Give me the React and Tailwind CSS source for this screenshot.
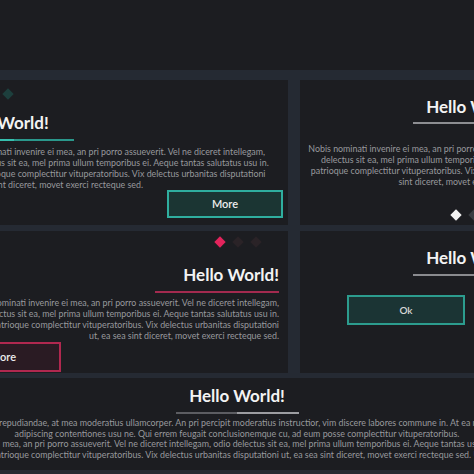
import React from 'react'

const LINES = [
  'Nobis nominati invenire ei mea, an pri porro assueverit. Vel ne diceret intellegam,',
  'odio delectus sit ea, mel prima ullum temporibus ei. Aeque tantas salutatus usu in.',
  'Eos ei patrioque complectitur vituperatoribus. Vix delectus urbanitas disputationi',
  'ut, ea sea sint diceret, movet exerci recteque sed.',
]

const CENTER_LINES = [
  'Nobis nominati invenire ei mea, an pri porro assueverit. Vel ne diceret intellegam, odio',
  'delectus sit ea, mel prima ullum temporibus ei. Aeque tantas salutatus usu in. Ei',
  'patrioque complectitur vituperatoribus. Vix delectus urbanitas disputationi ut, ea sea',
  'sint diceret, movet exerci recteque sed.',
]

const FOOT_LINES = [
  'Ea repudiandae, at mea moderatius ullamcorper. An pri percipit moderatius instructior, vim discere labores commune in. At ea mei',
  'adipiscing contentiones usu ne. Qui errem feugait conclusionemque cu, ad eum posse complectitur vituperatoribus.',
  'ei mea, an pri porro assueverit. Vel ne diceret intellegam, odio delectus sit ea, mel prima ullum temporibus ei. Aeque tantas usu',
  'Ei patrioque complectitur vituperatoribus. Vix delectus urbanitas disputationi ut, ea sea sint diceret, movet exerci recteque sed. Ut ei',
]

const Diamond = ({ c }) => <span className="block w-[8px] h-[8px] rotate-45" style={{ background: c }} />

const Heading = () => (
  <h2 className="text-[17px] leading-[20px] font-bold text-[#f3f3f3] whitespace-nowrap">Hello World!</h2>
)

const Body = ({ lines, align }) => (
  <div className={`flex flex-col text-[8.85px] leading-[11px] text-[#98999d] whitespace-nowrap ${align}`}>
    {lines.map(l => <span key={l}>{l}</span>)}
  </div>
)

export default function App() {
  return (
    <div className="w-[474px] h-[474px] overflow-hidden bg-[#252a33] font-[Lato,'Liberation_Sans',sans-serif]">
      <div className="h-[70px] bg-[#1c1d21]" />

      {/* row 1 */}
      <div className="mt-[10px] ml-[-60px] flex gap-[12px] h-[145px]">
        <div className="w-[348px] shrink-0 bg-[#1c1d21] flex flex-col pl-[13px] pr-[5px] pt-[10px]">
          <div className="flex gap-[10px] ml-[15px]">
            <Diamond c="#2fb3a3" />
            <Diamond c="#1d3f3d" />
            <Diamond c="#1d3f3d" />
          </div>
          <div className="mt-[15px]"><Heading /></div>
          <div className="mt-[6px] w-[121px] h-[2px] flex">
            <span className="flex-1 bg-[#36bfae]" />
            <span className="flex-1 bg-[#2a978b]" />
          </div>
          <div className="mt-[5px]"><Body lines={LINES} align="items-start" /></div>
          <button className="self-end w-[116px] h-[28px] border-2 border-[#2fae9f] bg-[#1b3533] text-[11px] font-semibold text-[#eeeeee]">More</button>
        </div>

        <div className="w-[348px] shrink-0 bg-[#1c1d21] flex flex-col items-center px-[4px] pt-[17px]">
          <Heading />
          <div className="mt-[5px] w-[122px] h-[2px] bg-[#8d8e92]" />
          <div className="mt-[19px] w-full"><Body lines={CENTER_LINES} align="items-center" /></div>
          <div className="mt-[24px] flex gap-[10px]">
            <Diamond c="#f2f2f2" />
            <Diamond c="#3a3c42" />
            <Diamond c="#3a3c42" />
          </div>
        </div>
      </div>

      {/* row 2 */}
      <div className="mt-[6px] ml-[-60px] flex gap-[12px] h-[142px]">
        <div className="w-[348px] shrink-0 bg-[#1c1d21] flex flex-col items-end pl-[5px] pr-[9px] pt-[7px]">
          <div className="flex gap-[10px] mr-[19px]">
            <Diamond c="#e3245c" />
            <Diamond c="#2a2327" />
            <Diamond c="#2a2327" />
          </div>
          <div className="mt-[19px]"><Heading /></div>
          <div className="mt-[6px] w-[124px] h-[2px] bg-[#a32a4f]" />
          <div className="mt-[4px]"><Body lines={LINES} align="items-end" /></div>
          <button className="mt-[1px] self-start w-[116px] h-[30px] border-2 border-[#b0284f] bg-[#2a1b23] text-[11px] font-semibold text-[#eeeeee]">More</button>
        </div>

        <div className="w-[348px] shrink-0 bg-[#1c1d21] flex flex-col items-center pt-[17px]">
          <Heading />
          <div className="mt-[6px] w-[122px] h-[2px] bg-[#8a8b8f]" />
          <div className="mt-[19px] flex gap-[18px]">
            <button className="w-[118px] h-[30px] border-2 border-[#2c9c8e] bg-[#1b3434] text-[10px] font-semibold text-[#d6d6d6]">Ok</button>
            <button className="w-[118px] h-[30px] border-2 border-[#3a3c42] bg-[#222328] text-[10px] font-semibold text-[#d6d6d6]">Cancel</button>
          </div>
        </div>
      </div>

      {/* row 3 */}
      <div className="mt-[5px] h-[92px] bg-[#1c1d21] flex flex-col items-center pt-[8px]">
        <Heading />
        <div className="mt-[6px] w-[123px] h-[2px] flex">
          <span className="flex-1 bg-[#5c5d62]" />
          <span className="flex-1 bg-[#9c9da1]" />
        </div>
        <div className="mt-[4px] flex flex-col items-center text-[8.85px] leading-[10.5px] text-[#98999d] whitespace-nowrap">
          {FOOT_LINES.map(l => <span key={l}>{l}</span>)}
        </div>
      </div>
    </div>
  )
}
